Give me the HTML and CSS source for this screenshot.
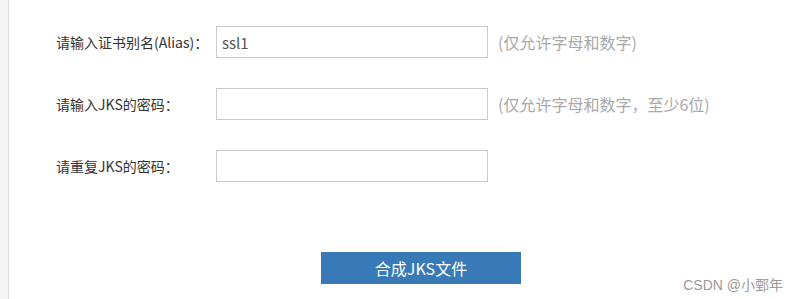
FILE: index.html
```html
<!DOCTYPE html>
<html lang="zh-CN">
<head>
<meta charset="utf-8">
<title>JKS</title>
<link rel="stylesheet" href="styles.css">
</head>
<body>
<div class="page">
  <div class="side"></div>
  <div class="main">
    <form class="form">
      <div class="row">
        <label class="label">请输入证书别名(Alias)：</label>
        <input class="field" type="text" value="ssl1">
        <span class="hint">(仅允许字母和数字)</span>
      </div>
      <div class="row">
        <label class="label">请输入JKS的密码：</label>
        <input class="field" type="password">
        <span class="hint">(仅允许字母和数字，至少6位)</span>
      </div>
      <div class="row">
        <label class="label">请重复JKS的密码：</label>
        <input class="field" type="password">
      </div>
      <div class="actions">
        <button class="btn" type="button">合成JKS文件</button>
      </div>
    </form>
  </div>
</div>
<div class="mark">CSDN @小鄄年</div>
</body>
</html>
```
FILE: styles.css
```css
html, body {
  margin: 0;
  padding: 0;
  background: #fff;
  height: 100%;
  overflow: hidden;
}
body {
  font-family: "Noto Sans CJK SC", "Noto Sans", sans-serif;
  color: #333;
}
.page {
  display: flex;
  height: 299px;
}
.side {
  width: 8px;
  flex: none;
  background: #f5f5f5;
  border-right: 1px solid #dcdcdc;
}
.main {
  flex: 1;
  padding: 26px 0 0 47px;
}
.form {
  display: flex;
  flex-direction: column;
  gap: 30px;
}
.row {
  display: flex;
  align-items: center;
  height: 32px;
}
.label {
  width: 160px;
  flex: none;
  font-size: 14px;
  color: #333;
}
.field {
  box-sizing: border-box;
  width: 272px;
  height: 32px;
  margin: 0;
  border: 1px solid #cbcbcb;
  padding: 0 5px;
  font-family: "Noto Sans CJK SC", sans-serif;
  font-size: 15px;
  color: #555;
  outline: none;
}
.hint {
  margin-left: 10px;
  font-size: 16px;
  color: #a9a9a9;
}
.actions {
  margin-top: 40px;
  padding-left: 265px;
}
.btn {
  width: 200px;
  height: 32px;
  border: 0;
  margin: 0;
  background: #3879b8;
  color: #fff;
  font-family: "Noto Sans CJK SC", sans-serif;
  font-size: 16px;
  cursor: pointer;
}
.mark {
  position: absolute;
  right: 16px;
  bottom: 5px;
  font-family: "Liberation Sans", "Noto Sans CJK SC", sans-serif;
  font-size: 14px;
  color: #9a9a9a;
}
```
